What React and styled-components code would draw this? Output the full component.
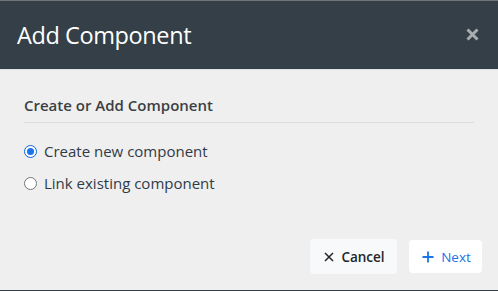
import React, { useState } from "react";
import styled, { createGlobalStyle } from "styled-components";

const GlobalStyle = createGlobalStyle`
  html, body {
    margin: 0;
    padding: 0;
    background: #343f48;
    font-family: "Open Sans", "Noto Sans", sans-serif;
  }
`;

const Page = styled.div`
  width: 498px;
  height: 291px;
  display: flex;
  flex-direction: column;
  background: #343f48;
  overflow: hidden;
`;

const Backdrop = styled.div`
  height: 1px;
  background: #6f7479;
`;

const Modal = styled.div`
  height: 289px;
  display: flex;
  flex-direction: column;
  background: #efefef;
`;

const Header = styled.div`
  height: 69px;
  flex-shrink: 0;
  background: #343f48;
  border-bottom: 1px solid #dfe3e7;
  display: flex;
  align-items: center;
  justify-content: space-between;
  padding: 0 18px 0 17px;
  box-sizing: border-box;
`;

const Title = styled.h1`
  margin: 0;
  font-size: 23.5px;
  font-weight: 400;
  color: #ffffff;
  letter-spacing: -0.4px;
`;

const Close = styled.button`
  border: none;
  background: none;
  padding: 0;
  width: 14px;
  height: 14px;
  display: flex;
  cursor: pointer;
`;

const Body = styled.div`
  flex: 1;
  padding: 25px 24px 0 24px;
  display: flex;
  flex-direction: column;
`;

const Section = styled.h2`
  margin: 0;
  font-size: 15px;
  font-weight: 600;
  color: #3b3f44;
  padding-bottom: 7px;
  border-bottom: 1px solid #dcdcdc;
`;

const Options = styled.div`
  display: flex;
  flex-direction: column;
  gap: 8px;
  margin-top: 16px;
`;

const Option = styled.label`
  display: flex;
  align-items: center;
  gap: 7px;
  font-size: 15px;
  color: #2f3b47;
  height: 24px;
  cursor: pointer;
`;

const Dot = styled.span`
  width: 13px;
  height: 13px;
  border-radius: 50%;
  box-sizing: border-box;
  border: ${(p) => (p.checked ? "1px solid #0a66e0" : "1px solid #767676")};
  background: #fff;
  display: flex;
  align-items: center;
  justify-content: center;
  &::after {
    content: "";
    width: 7px;
    height: 7px;
    border-radius: 50%;
    background: ${(p) => (p.checked ? "#1a73e8" : "transparent")};
  }
`;

const Footer = styled.div`
  display: flex;
  justify-content: flex-end;
  align-items: center;
  gap: 12px;
  padding: 0 16px 16px 0;
`;

const Button = styled.button`
  width: ${(p) => (p.primary ? "73px" : "87px")};
  height: ${(p) => (p.primary ? "33px" : "35px")};
  border: none;
  border-radius: 4px;
  padding: 0 0 0 2px;
  display: flex;
  align-items: center;
  justify-content: center;
  gap: 7px;
  font-family: inherit;
  font-size: 13.5px;
  font-weight: ${(p) => (p.primary ? 400 : 600)};
  color: ${(p) => (p.primary ? "#1a73e8" : "#212529")};
  background: ${(p) => (p.primary ? "#ffffff" : "#f8f9fa")};
  cursor: pointer;
`;

export default function App() {
  const [choice, setChoice] = useState("new");
  return (
    <Page>
      <GlobalStyle />
      <Backdrop />
      <Modal>
        <Header>
          <Title>Add Component</Title>
          <Close aria-label="Close">
            <svg width="13" height="13" viewBox="0 0 13 13">
              <path d="M1.5 1.5 L11.5 11.5 M11.5 1.5 L1.5 11.5" stroke="#a9adb1" strokeWidth="3" />
            </svg>
          </Close>
        </Header>
        <Body>
          <Section>Create or Add Component</Section>
          <Options>
            <Option onClick={() => setChoice("new")}>
              <Dot checked={choice === "new"} />
              Create new component
            </Option>
            <Option onClick={() => setChoice("link")}>
              <Dot checked={choice === "link"} />
              Link existing component
            </Option>
          </Options>
        </Body>
        <Footer>
          <Button>
            <svg width="10" height="10" viewBox="0 0 10 10">
              <path d="M1 1 L9 9 M9 1 L1 9" stroke="#212529" strokeWidth="1.5" />
            </svg>
            Cancel
          </Button>
          <Button primary>
            <svg width="12" height="12" viewBox="0 0 12 12">
              <path d="M6 0.5 V11.5 M0.5 6 H11.5" stroke="#1a73e8" strokeWidth="1.8" />
            </svg>
            Next
          </Button>
        </Footer>
      </Modal>
    </Page>
  );
}
